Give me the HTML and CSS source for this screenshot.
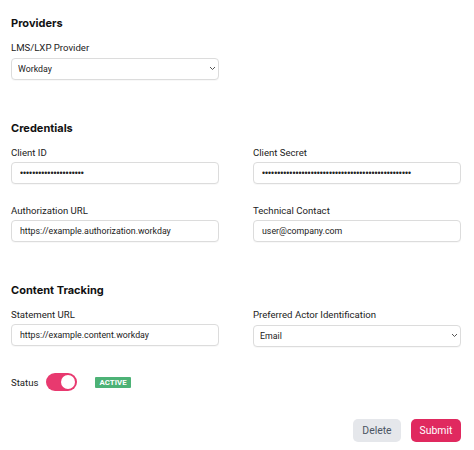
FILE: index.html
```html
<!DOCTYPE html>
<html>
<head>
<meta charset="utf-8">
<link rel="stylesheet" href="styles.css">
</head>
<body>
<form class="page">
  <section class="section">
    <h2 class="heading">Providers</h2>
    <div class="grid">
      <div class="field">
        <label class="label">LMS/LXP Provider</label>
        <div class="select-wrap">
          <select class="control select"><option>Workday</option></select>
          <svg class="chev" width="7" height="5" viewBox="0 0 7 5"><path d="M1 1 L3.5 3.5 L6 1" fill="none" stroke="#555" stroke-width="1"/></svg>
        </div>
      </div>
    </div>
  </section>

  <section class="section">
    <h2 class="heading">Credentials</h2>
    <div class="grid">
      <div class="field">
        <label class="label">Client ID</label>
        <input class="control" type="password" value="aaaaaaaaaaaaaaaaaaaaa">
      </div>
      <div class="field">
        <label class="label">Client Secret</label>
        <input class="control" type="password" value="aaaaaaaaaaaaaaaaaaaaaaaaaaaaaaaaaaaaaaaaaaaaaaaaa">
      </div>
      <div class="field">
        <label class="label">Authorization URL</label>
        <input class="control" type="text" value="https://example.authorization.workday">
      </div>
      <div class="field">
        <label class="label">Technical Contact</label>
        <input class="control" type="text" value="user@company.com">
      </div>
    </div>
  </section>

  <section class="section">
    <h2 class="heading">Content Tracking</h2>
    <div class="grid">
      <div class="field">
        <label class="label">Statement URL</label>
        <input class="control" type="text" value="https://example.content.workday">
      </div>
      <div class="field">
        <label class="label">Preferred Actor Identification</label>
        <div class="select-wrap">
          <select class="control select"><option>Email</option></select>
          <svg class="chev" width="7" height="5" viewBox="0 0 7 5"><path d="M1 1 L3.5 3.5 L6 1" fill="none" stroke="#555" stroke-width="1"/></svg>
        </div>
      </div>
    </div>
    <div class="status-row">
      <span class="status-label">Status</span>
      <span class="toggle"><span class="knob"></span></span>
      <span class="badge">ACTIVE</span>
    </div>
  </section>

  <div class="actions">
    <button type="button" class="btn btn-delete">Delete</button>
    <button type="button" class="btn btn-submit">Submit</button>
  </div>
</form>
</body>
</html>
```

FILE: styles.css
```css
* { box-sizing: border-box; }
html, body { margin: 0; padding: 0; background: #ffffff; }
body {
  font-family: Roboto, "Liberation Sans", Arial, sans-serif;
  color: #1f1f1f;
}
.page {
  padding: 15px 13px 0 11px;
  display: flex;
  flex-direction: column;
}
.section { margin-bottom: 40px; }
.section:nth-child(3) { margin-bottom: 28px; }
.heading {
  margin: 0 0 11px 0;
  font-family: Inter, "Liberation Sans", sans-serif;
  font-weight: 700;
  font-size: 11px;
  line-height: 16px;
  color: #111;
}
.grid {
  display: grid;
  grid-template-columns: 208px 208px;
  column-gap: 34px;
  row-gap: 21px;
}
.field { display: flex; flex-direction: column; }
.label {
  font-size: 9.6px;
  line-height: 12px;
  margin-bottom: 3px;
  color: #222;
}
.control {
  width: 208px;
  height: 22px;
  border: 1px solid #dcdcdc;
  border-radius: 4px;
  background: #fff;
  font-family: Roboto, "Liberation Sans", Arial, sans-serif;
  font-size: 8.8px;
  color: #222;
  padding: 0 8px;
  outline: none;
  box-shadow: 0 1px 1px rgba(0,0,0,0.03);
}
.control[type="password"] { font-family: "Liberation Sans", Arial, sans-serif; font-size: 8.7px; }
.select-wrap { position: relative; width: 208px; }
.select {
  appearance: none;
  -webkit-appearance: none;
  padding-left: 6px;
}
.chev {
  position: absolute;
  right: 3px;
  top: 9px;
}
.status-row {
  display: flex;
  align-items: center;
  margin-top: 26px;
  height: 18px;
}
.status-label {
  font-size: 9.6px;
  color: #222;
  margin-right: 8px;
}
.toggle {
  width: 31px;
  height: 18px;
  border-radius: 9px;
  background: #e8396f;
  display: flex;
  align-items: center;
  justify-content: flex-end;
  padding-right: 2px;
  margin-right: 18px;
}
.knob {
  width: 14px;
  height: 14px;
  border-radius: 50%;
  background: #fff;
}
.badge {
  background: #4db276;
  color: #fff;
  font-weight: 700;
  font-size: 7.8px;
  line-height: 11px;
  padding: 0 4px;
  border-radius: 1px;
  letter-spacing: 0.1px;
}
.actions {
  display: flex;
  justify-content: flex-end;
  gap: 10px;
}
.btn {
  height: 23px;
  border: none;
  border-radius: 5px;
  font-family: Roboto, "Liberation Sans", Arial, sans-serif;
  font-size: 10.4px;
  padding: 0;
}
.btn-delete { background: #e5e7eb; color: #4b5563; width: 48px; }
.btn-submit { background: #e0295f; color: #fff; width: 50px; }
```
